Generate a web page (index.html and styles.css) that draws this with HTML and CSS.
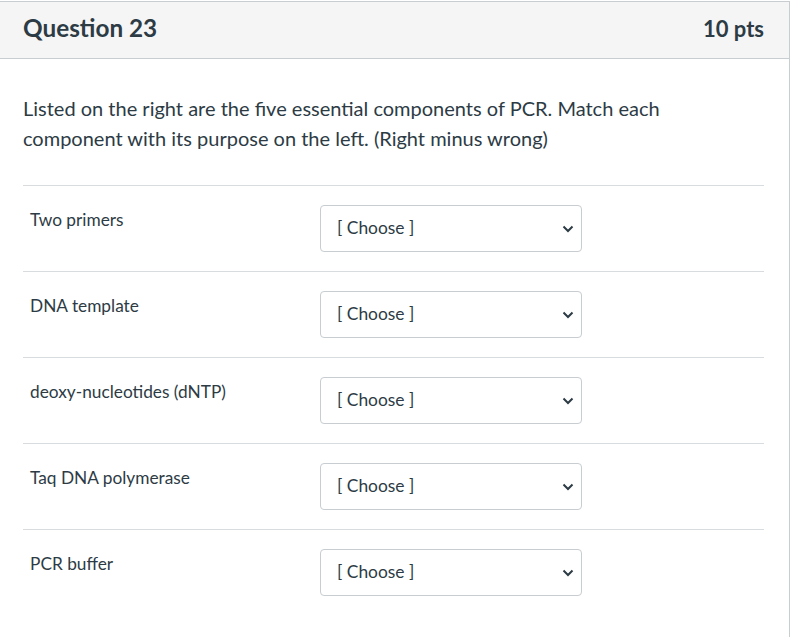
FILE: index.html
```html
<!DOCTYPE html>
<html lang="en">
<head>
<meta charset="utf-8">
<title>Question 23</title>
<link rel="stylesheet" href="styles.css">
</head>
<body>
<div class="quiz">
  <div class="header">
    <h2 class="title">Question 23</h2>
    <span class="points">10 pts</span>
  </div>
  <div class="content">
    <p class="prompt">Listed on the right are the five essential components of PCR. Match each component with its purpose on the left. (Right minus wrong)</p>
    <div class="rows">
      <div class="row">
        <div class="label">Two primers</div>
        <div class="select"><span class="value">[ Choose ]</span><svg class="chev" width="12" height="8" viewBox="0 0 12 8"><path d="M1.5 1.5 L6 6 L10.5 1.5" fill="none" stroke="#2d3b45" stroke-width="2"/></svg></div>
      </div>
      <div class="row">
        <div class="label">DNA template</div>
        <div class="select"><span class="value">[ Choose ]</span><svg class="chev" width="12" height="8" viewBox="0 0 12 8"><path d="M1.5 1.5 L6 6 L10.5 1.5" fill="none" stroke="#2d3b45" stroke-width="2"/></svg></div>
      </div>
      <div class="row">
        <div class="label">deoxy-nucleotides (dNTP)</div>
        <div class="select"><span class="value">[ Choose ]</span><svg class="chev" width="12" height="8" viewBox="0 0 12 8"><path d="M1.5 1.5 L6 6 L10.5 1.5" fill="none" stroke="#2d3b45" stroke-width="2"/></svg></div>
      </div>
      <div class="row">
        <div class="label">Taq DNA polymerase</div>
        <div class="select"><span class="value">[ Choose ]</span><svg class="chev" width="12" height="8" viewBox="0 0 12 8"><path d="M1.5 1.5 L6 6 L10.5 1.5" fill="none" stroke="#2d3b45" stroke-width="2"/></svg></div>
      </div>
      <div class="row">
        <div class="label">PCR buffer</div>
        <div class="select"><span class="value">[ Choose ]</span><svg class="chev" width="12" height="8" viewBox="0 0 12 8"><path d="M1.5 1.5 L6 6 L10.5 1.5" fill="none" stroke="#2d3b45" stroke-width="2"/></svg></div>
      </div>
    </div>
  </div>
</div>
</body>
</html>
```
FILE: styles.css
```css
* { box-sizing: border-box; }
html, body { margin: 0; padding: 0; background: #fff; }
body {
  font-family: Lato, "Open Sans", "Liberation Sans", sans-serif;
  color: #2d3b45;
  padding-top: 1px;
}
.quiz {
  width: 790px;
  height: 636px;
  border-top: 1px solid #c7cdd1;
  border-right: 1px solid #c7cdd1;
}
.header {
  height: 57px;
  background: #f5f5f5;
  border-bottom: 1px solid #c7cdd1;
  display: flex;
  align-items: center;
  justify-content: space-between;
  padding: 0 25px 3px 23px;
}
.title {
  margin: 0;
  font-size: 24.3px;
  font-weight: 700;
  line-height: 1;
}
.points {
  font-size: 22px;
  font-weight: 700;
  line-height: 1;
  color: #2d3b45;
}
.content {
  padding: 0 25px 0 23px;
}
.prompt {
  margin: 0;
  padding-top: 34px;
  font-size: 20px;
  line-height: 30px;
  width: 680px;
}
.rows {
  margin-top: 32px;
}
.row {
  display: flex;
  align-items: flex-start;
  border-top: 1px solid #d9dcdf;
  padding: 19px 0 19px 7px;
  height: 86px;
}
.label {
  width: 290px;
  font-size: 17.3px;
  line-height: 26px;
  margin-top: 2px;
}
.select {
  position: relative;
  width: 262px;
  height: 47px;
  border: 1px solid #c7cdd1;
  border-radius: 4px;
  background: #fff;
  display: flex;
  align-items: center;
  padding-left: 16px;
  padding-bottom: 2px;
}
.value {
  font-size: 17.4px;
  line-height: 1;
  color: #2d3b45;
}
.chev {
  position: absolute;
  right: 7px;
  top: 19px;
}
```
